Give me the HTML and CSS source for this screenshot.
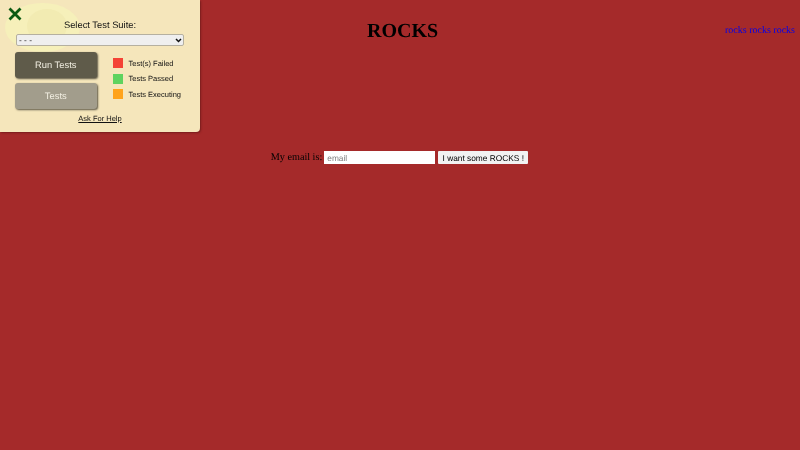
FILE: index.html
```html
<!DOCTYPE html>
<html lang="en">
<head>
<meta charset="utf-8">
<title>ROCKS</title>
<link rel="stylesheet" href="styles.css">
</head>
<body>
<aside class="panel">
  <div class="moon"><div class="crater"></div></div>
  <svg class="close" width="14" height="14" viewBox="0 0 14 14" aria-label="Close"><path d="M1.5 1.5L12.5 12.5M12.5 1.5L1.5 12.5" stroke="#0b5a12" stroke-width="2.8" fill="none"/></svg>
  <div class="panel-body">
    <label class="suite-label">Select Test Suite:</label>
    <div class="suite-wrap">
      <select class="suite"><option>- - -</option></select>
      <svg class="chevron" width="7" height="5" viewBox="0 0 7 5"><path d="M1 1L3.5 3.5L6 1" stroke="#111" stroke-width="1.5" fill="none"/></svg>
    </div>
    <div class="controls">
      <div class="buttons">
        <button class="action run">Run Tests</button>
        <button class="action tests">Tests</button>
      </div>
      <ul class="legend">
        <li><span class="swatch failed"></span>Test(s) Failed</li>
        <li><span class="swatch passed"></span>Tests Passed</li>
        <li><span class="swatch executing"></span>Tests Executing</li>
      </ul>
    </div>
    <a class="help" href="#">Ask For Help</a>
  </div>
</aside>
<header class="top">
  <h1 class="title">ROCKS</h1>
  <nav class="links"><a href="#">rocks</a> <a href="#">rocks</a> <a href="#">rocks</a></nav>
</header>
<form class="signup">
  <label>My email is:</label>
  <input class="email" type="text" placeholder="email">
  <button class="submit" type="button">I want some ROCKS !</button>
</form>
</body>
</html>
```

FILE: styles.css
```css
html, body { margin: 0; padding: 0; }
html { background: #a52a2a; }
body {
  width: 800px;
  height: 450px;
  overflow: hidden;
  background: #a52a2a;
  font-family: "Liberation Serif", serif;
  font-size: 10.2px;
  color: #000;
  text-rendering: geometricPrecision;
  filter: blur(0.25px);
}
.top {
  display: grid;
  grid-template-columns: 1fr auto 1fr;
  align-items: center;
  padding: 18.5px 5px 0 10px;
  height: 24px;
}
.title {
  grid-column: 2;
  margin: 0;
  font-size: 20px;
  line-height: 24px;
  font-weight: bold;
}
.links {
  grid-column: 3;
  justify-self: end;
  font-size: 10px;
}
.links a { color: #0000ee; text-decoration: none; }
.signup {
  display: flex;
  justify-content: center;
  align-items: center;
  gap: 2px;
  margin-top: 108.5px;
  padding-right: 1px;
}
.email {
  box-sizing: border-box;
  width: 111px;
  height: 13px;
  padding: 0 3px;
  border: 0;
  background: #fff;
  font: 8.33px "Liberation Sans", sans-serif;
  text-rendering: geometricPrecision;
}
.email::placeholder { color: #808080; }
.submit {
  box-sizing: border-box;
  width: 90px;
  height: 13px;
  margin-left: 1px;
  padding: 0;
  border: 0;
  border-radius: 1px;
  background: #f2f2f2;
  color: #000;
  font: 8.33px "Liberation Sans", sans-serif;
  text-rendering: geometricPrecision;
  white-space: nowrap;
}
.panel {
  position: absolute;
  left: 0;
  top: 0;
  width: 200px;
  height: 132px;
  background: #f5e6bb;
  border-bottom-right-radius: 4px;
  box-shadow: 1px 1px 2px rgba(90, 20, 20, 0.6);
}
.moon {
  position: absolute;
  left: 5px;
  top: 3px;
  width: 75px;
  height: 49px;
  border-radius: 50%;
  background: #f6f0ba;
}
.crater {
  position: absolute;
  left: 22px;
  top: 6px;
  width: 40px;
  height: 34px;
  border-radius: 50%;
  background: #f2ebb2;
}
.close {
  position: absolute;
  left: 8px;
  top: 7px;
}
.panel-body {
  position: relative;
  display: flex;
  flex-direction: column;
  align-items: center;
  font-family: "Liberation Sans", sans-serif;
  padding-top: 18px;
}
.suite-label {
  font-size: 9.375px;
  line-height: 12px;
  padding-top: 0.5px;
  color: #111;
}
.suite-wrap {
  position: relative;
  width: 168px;
  height: 12px;
  margin-top: 3.5px;
}
.suite {
  appearance: none;
  display: block;
  box-sizing: border-box;
  width: 100%;
  height: 12px;
  padding: 0 0 0 2px;
  border: 1px solid #b5b0a0;
  border-radius: 2px;
  background: #efefef;
  font: 8.33px "Liberation Sans", sans-serif;
  text-rendering: geometricPrecision;
  color: #222;
}
.chevron {
  position: absolute;
  right: 2px;
  top: 4px;
}
.controls {
  display: flex;
  align-self: flex-start;
  margin: 6px 0 0 15px;
}
.buttons {
  display: flex;
  flex-direction: column;
  gap: 5px;
  width: 82px;
}
.action {
  box-sizing: border-box;
  width: 81.5px;
  height: 26px;
  padding: 0;
  border: 0;
  border-radius: 3px;
  box-shadow: 1px 1px 2px #5a5545;
  color: #f2efe2;
  font: 9.375px "Liberation Sans", sans-serif;
  text-rendering: geometricPrecision;
}
.run { background: #5f5b4a; }
.tests { background: #a29d8c; }
.legend {
  list-style: none;
  margin: 0 0 0 16px;
  padding: 6px 0 0;
  display: flex;
  flex-direction: column;
  gap: 5.7px;
  font-size: 7.5px;
  color: #111;
}
.legend li {
  display: flex;
  align-items: center;
  gap: 5.5px;
  height: 10px;
  white-space: nowrap;
}
.swatch { width: 10px; height: 10px; flex: none; }
.failed { background: #f44336; }
.passed { background: #5fd35f; }
.executing { background: #ffa31a; }
.help {
  margin-top: 5px;
  font-size: 7.5px;
  line-height: 10px;
  color: #111;
  text-decoration: underline;
}
```
